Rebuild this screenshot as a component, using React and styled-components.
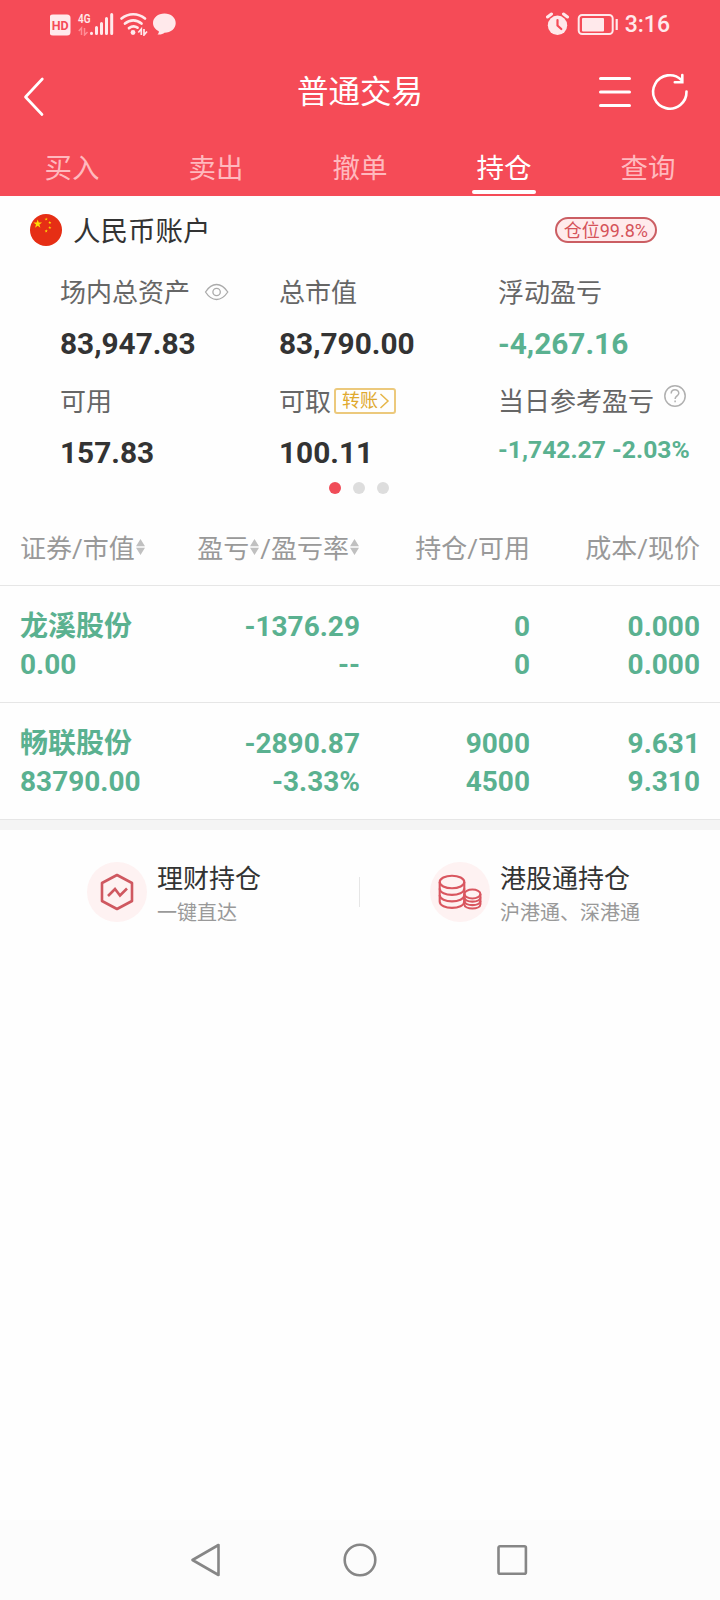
import React from "react";
import styled, { createGlobalStyle } from "styled-components";

const GlobalStyle = createGlobalStyle`
  body {
    margin: 0;
    background: #fefefe;
    font-family: Roboto, "Noto Sans CJK SC", sans-serif;
  }
`;

const Screen = styled.div`
  width: 720px;
  height: 1600px;
  display: flex;
  flex-direction: column;
  overflow: hidden;
  color: #333;
`;

const Header = styled.header`
  height: 196px;
  display: flex;
  flex-direction: column;
  background: #f54b57;
  color: #fff;
`;

const StatusBar = styled.div`
  height: 48px;
  padding: 0 50px;
  display: flex;
  align-items: center;
  justify-content: space-between;
  box-sizing: border-box;
  color: #ffe9eb;
`;

const StatusRight = styled.div`
  display: flex;
  align-items: center;
`;

const Clock = styled.span`
  margin-left: 6px;
  font-size: 23px;
  font-weight: 500;
  line-height: 50px;
  padding-top: 2px;
`;

const TitleBar = styled.div`
  height: 88px;
  padding: 0 31px 0 22px;
  display: grid;
  grid-template-columns: 100px 1fr 91px;
  align-items: center;
`;

const BackIcon = styled.svg`
  margin-top: 10px;
`;

const Title = styled.h1`
  margin: 0;
  padding-top: 2px;
  font-size: 31.5px;
  font-weight: 400;
  line-height: 86px;
  text-align: center;
`;

const Tabs = styled.nav`
  height: 60px;
  display: flex;
`;

const Tab = styled.div`
  flex: 1;
  display: flex;
  flex-direction: column;
  align-items: center;
  font-size: 27.5px;
  line-height: 54px;
  padding-top: 6px;
  height: 54px;
  color: ${(p) => (p.$active ? "#fff" : "#ffb9be")};
`;

const TabLine = styled.div`
  width: 64px;
  height: 4px;
  margin-top: -6px;
  flex-shrink: 0;
  border-radius: 2px;
  background: #fff;
`;

const Account = styled.section`
  height: 68px;
  padding: 0 63px 0 30px;
  display: flex;
  align-items: center;
`;

const AccountName = styled.span`
  margin-left: 11px;
  padding-top: 3px;
  flex: 1;
  font-size: 27.5px;
  line-height: 65px;
`;

const Pill = styled.span`
  height: 22px;
  padding: 0 7px;
  border: 2px solid #cb5e63;
  border-radius: 13px;
  background: #ffebec;
  color: #d5535a;
  font-size: 18px;
  line-height: 23px;
`;

const Summary = styled.section`
  padding: 0 0 0 60px;
  display: grid;
  grid-template-columns: 219px 219px 1fr;
  grid-auto-rows: 109px;
`;

const Cell = styled.div`
  display: flex;
  flex-direction: column;
`;

const Label = styled.div`
  height: 58px;
  display: flex;
  align-items: center;
  font-size: 26px;
  line-height: 60px;
  color: #666;
`;

const Value = styled.div`
  font-size: ${(p) => (p.$small ? "24.7px" : "29.8px")};
  font-weight: 700;
  line-height: ${(p) => (p.$small ? "38px" : "44px")};
  color: ${(p) => (p.$down ? "#5ab190" : "#333")};
`;

const EyeIcon = styled.svg`
  margin: 0 0 2px 14px;
`;

const HelpIcon = styled.svg`
  margin: 0 0 12px 10px;
`;

const Transfer = styled.span`
  height: 22px;
  margin-left: 3px;
  padding: 0 4px 0 6px;
  display: flex;
  align-items: center;
  gap: 1px;
  border: 2px solid #ecc97c;
  border-radius: 3px;
  font-size: 18px;
  line-height: 22px;
  color: #e0a92e;
  margin-bottom: 2px;
`;

const Dots = styled.div`
  height: 12px;
  margin-left: -3px;
  display: flex;
  justify-content: center;
  gap: 12px;
`;

const Dot = styled.span`
  width: 12px;
  height: 12px;
  border-radius: 50%;
  background: ${(p) => (p.$active ? "#f04c58" : "#ddd")};
`;

const Row = styled.div`
  padding: 0 20px;
  display: grid;
  grid-template-columns: 176px 164px 170px 170px;
  box-sizing: border-box;
  border-bottom: 1px solid #e6e6e6;
`;

const TableHead = styled(Row)`
  height: 92px;
  padding-top: 17px;
  font-size: 26px;
  line-height: 76px;
  color: #999;
`;

const HeadCell = styled.div`
  display: flex;
  align-items: center;
  white-space: nowrap;
  height: 76px;
  justify-content: ${(p) => (p.$left ? "flex-start" : "flex-end")};
`;

const SortIcon = styled.svg`
  margin: -5px 1px 0 1px;
  flex-shrink: 0;
`;

const StockRow = styled(Row)`
  height: 117px;
  padding-top: 22px;
  font-size: 28px;
  font-weight: 700;
  line-height: 38px;
  color: #5ab190;
`;

const StockCell = styled.div`
  text-align: ${(p) => (p.$left ? "left" : "right")};
`;

const Band = styled.div`
  height: 10px;
  background: #f4f4f4;
`;

const Entries = styled.section`
  height: 124px;
  display: flex;
  align-items: center;
`;

const Entry = styled.div`
  width: 360px;
  padding-left: ${(p) => p.$indent}px;
  display: flex;
  align-items: center;
  box-sizing: border-box;
`;

const EntryIcon = styled.div`
  width: 60px;
  height: 60px;
  border-radius: 50%;
  background: #fef2f2;
`;

const EntryText = styled.div`
  margin-left: 10px;
  padding-top: 4px;
`;

const EntryTitle = styled.div`
  font-size: 26px;
  line-height: 38px;
`;

const EntrySub = styled.div`
  font-size: 20px;
  line-height: 30px;
  color: #999;
`;

const Divider = styled.div`
  width: 1px;
  height: 30px;
  margin: 0 0 0 -1px;
  background: #e6e6e6;
`;

const NavBar = styled.footer`
  height: 80px;
  margin-top: auto;
  display: flex;
  align-items: center;
  justify-content: center;
  gap: 120px;
  background: #fcfcfc;
`;

const columns = [
  { head: ["证券/市值", "sort"], left: true },
  { head: ["盈亏", "sort", "/盈亏率", "sort"] },
  { head: ["持仓/可用"] },
  { head: ["成本/现价"] },
];

const stocks = [
  [
    ["龙溪股份", "0.00"],
    ["-1376.29", "--"],
    ["0", "0"],
    ["0.000", "0.000"],
  ],
  [
    ["畅联股份", "83790.00"],
    ["-2890.87", "-3.33%"],
    ["9000", "4500"],
    ["9.631", "9.310"],
  ],
];

const tabs = ["买入", "卖出", "撤单", "持仓", "查询"];

const STAR = "0,-1 .225,-.309 .951,-.309 .363,.118 .588,.809 0,.382 -.588,.809 -.363,.118 -.951,-.309 -.225,-.309";

function Sort() {
  return (
    <SortIcon width="9" height="16" viewBox="0 0 9 16" fill="#c0c0c0">
      <path d="M4.5 0L9 7.200H0zM4.500 16L0 8.800h9z" />
    </SortIcon>
  );
}

function StatusIcons() {
  return (
    <svg width="130" height="24" viewBox="50 12 130 24" fill="currentColor">
      <rect x="49.500" y="14.500" width="21" height="21" rx="3.500" />
      <text x="60.200" y="30" fontSize="13" fontWeight="700" textAnchor="middle" fill="#f54b57" textLength="17" lengthAdjust="spacingAndGlyphs">
        HD
      </text>
      <text x="78" y="22.800" fontSize="13" fontWeight="600" textLength="12.500" lengthAdjust="spacingAndGlyphs">
        4G
      </text>
      <path d="M81.500 35v-7l-2.700 3M84.500 28v7l3-3" fill="none" stroke="#ff8d95" strokeWidth="1.500" />
      <g stroke="currentColor" strokeWidth="3" strokeLinecap="round">
        <path d="M91.500 33.200v.3M96.500 27.500v6M101.500 23.500v10M106.500 18.500v15M111.700 14.500v19" />
      </g>
      <g fill="none" stroke="currentColor" strokeWidth="2.700" strokeLinecap="round">
        <path d="M121.500 18.500c7-5.700 16.500-5.700 23.500 0M125 23.500c5-4.300 11.500-4.300 16.500 0M129 28.200c3-2.200 6-2.200 8.500-.5" />
      </g>
      <circle cx="133" cy="32.500" r="2.400" />
      <path d="M141.300 35v-6l-3 3.500M144 29v6l3-3.500" fill="none" stroke="currentColor" strokeWidth="1.700" />
      <path d="M164.500 13.500c6.500 0 11.200 4.200 11.200 9.500s-4.700 9.800-11.200 9.800c-1.500 1.400-4 2-7 1.700 1-.9 1.500-2 1.300-3.200-3.500-1.700-5.800-4.800-5.800-8.300 0-5.300 5-9.500 11.500-9.500z" />
    </svg>
  );
}

function App() {
  return (
    <>
      <GlobalStyle />
      <Screen>
        <Header>
          <StatusBar>
            <StatusIcons />
            <StatusRight>
              <svg width="73" height="24" viewBox="546 12 73 24">
                <circle cx="557.500" cy="25.300" r="9.700" fill="currentColor" />
                <path d="M547.500 17l4-3M567.500 17l-4-3" stroke="currentColor" strokeWidth="3" strokeLinecap="round" />
                <path d="M557.500 20v5.500l3.800 3.500" fill="none" stroke="#f54b57" strokeWidth="2.200" strokeLinecap="round" />
                <rect x="578.700" y="15" width="34" height="19" rx="3.500" fill="none" stroke="currentColor" strokeWidth="2" />
                <rect x="582" y="18" width="22" height="13.500" rx="1" fill="currentColor" />
                <path d="M616.700 19v11" stroke="currentColor" strokeWidth="2.200" />
              </svg>
              <Clock>3:16</Clock>
            </StatusRight>
          </StatusBar>
          <TitleBar>
            <BackIcon width="24" height="40" viewBox="0 0 24 40" fill="none" stroke="#fff" strokeWidth="2.700" strokeLinecap="round" strokeLinejoin="round">
              <path d="M20.300 2L3.500 20 20 37.500" />
            </BackIcon>
            <Title>普通交易</Title>
            <svg width="91" height="40" viewBox="598 72 91 40" fill="none" stroke="#fff" strokeWidth="3" strokeLinecap="round">
              <path d="M600.500 78.500h29M600.500 92h29M600.500 105.500h29" />
              <path d="M686.500 91.500a16.700 16.700 0 1 1-5-11.500" strokeWidth="2.600" />
              <path d="M682.300 75v7.200h-7.500" strokeWidth="2.600" />
            </svg>
          </TitleBar>
          <Tabs>
            {tabs.map((name) => (
              <Tab key={name} $active={name === "持仓"}>
                {name}
                {name === "持仓" && <TabLine />}
              </Tab>
            ))}
          </Tabs>
        </Header>

        <Account>
          <svg width="32" height="32" viewBox="0 0 32 32">
            <circle cx="16" cy="16" r="16" fill="#e62e15" />
            <g fill="#fddc05">
              <polygon points={STAR} transform="translate(7.700 10) scale(4.600)" />
              <polygon points={STAR} transform="translate(16.200 5.200) scale(1.700)" />
              <polygon points={STAR} transform="translate(19.800 8.600) scale(1.700)" />
              <polygon points={STAR} transform="translate(19.800 13.700) scale(1.700)" />
              <polygon points={STAR} transform="translate(16.200 17) scale(1.700)" />
            </g>
          </svg>
          <AccountName>人民币账户</AccountName>
          <Pill>仓位99.8%</Pill>
        </Account>

        <Summary>
          <Cell>
            <Label>
              场内总资产
              <EyeIcon width="26" height="18" viewBox="0 0 26 18" fill="none" stroke="#aaa" strokeWidth="1.300">
                <path d="M1.500 9C8-1 17-1 23.800 9 17 19 8 19 1.500 9z" />
                <circle cx="12.600" cy="9" r="3.700" />
              </EyeIcon>
            </Label>
            <Value>83,947.83</Value>
          </Cell>
          <Cell>
            <Label>总市值</Label>
            <Value>83,790.00</Value>
          </Cell>
          <Cell>
            <Label>浮动盈亏</Label>
            <Value $down>-4,267.16</Value>
          </Cell>
          <Cell>
            <Label>可用</Label>
            <Value>157.83</Value>
          </Cell>
          <Cell>
            <Label>
              可取
              <Transfer>
                转账
                <svg width="11" height="16" viewBox="0 0 11 16" fill="none" stroke="#e6b649" strokeWidth="1.500">
                  <path d="M1.500 1l7.500 7-7.500 7" />
                </svg>
              </Transfer>
            </Label>
            <Value>100.11</Value>
          </Cell>
          <Cell>
            <Label>
              当日参考盈亏
              <HelpIcon width="22" height="22" viewBox="0 0 22 22" fill="none" stroke="#b0b0b0" strokeWidth="1.500">
                <circle cx="11" cy="11" r="10.200" />
                <path d="M7.200 8.500c0-5 7.600-4.800 7.600-.3 0 2.500-3.700 2.900-3.700 5.700M11.100 15.500v1.800" />
              </HelpIcon>
            </Label>
            <Value $small $down>-1,742.27 -2.03%</Value>
          </Cell>
        </Summary>

        <Dots>
          <Dot $active />
          <Dot />
          <Dot />
        </Dots>

        <TableHead>
          {columns.map((col, i) => (
            <HeadCell key={i} $left={col.left}>
              {col.head.map((part, j) => (part === "sort" ? <Sort key={j} /> : <span key={j}>{part}</span>))}
            </HeadCell>
          ))}
        </TableHead>
        {stocks.map((stock) => (
          <StockRow key={stock[0][0]}>
            {stock.map(([top, bottom], i) => (
              <StockCell key={i} $left={i === 0}>
                <div>{top}</div>
                <div>{bottom}</div>
              </StockCell>
            ))}
          </StockRow>
        ))}
        <Band />

        <Entries>
          <Entry $indent={87}>
            <EntryIcon>
              <svg width="60" height="60" viewBox="0 0 60 60" fill="none" stroke="#cf5860" strokeWidth="2.600" strokeLinejoin="round">
                <path d="M30 13l15 8v18l-15 8-15-8V21z" />
                <path d="M21 34l7-7 5 6.500 7-7" strokeLinejoin="miter" />
              </svg>
            </EntryIcon>
            <EntryText>
              <EntryTitle>理财持仓</EntryTitle>
              <EntrySub>一键直达</EntrySub>
            </EntryText>
          </Entry>
          <Divider />
          <Entry $indent={70}>
            <EntryIcon>
              <svg width="60" height="60" viewBox="0 0 60 60" fill="none" stroke="#d9565f" strokeWidth="2.100">
                <ellipse cx="22" cy="20" rx="12.300" ry="6.300" />
                <path d="M9.700 20v19.500c0 8.500 24.600 8.500 24.600 0V20" />
                <path d="M9.700 26.500c0 8.500 24.600 8.500 24.600 0M9.700 33c0 8.500 24.600 8.500 24.600 0" />
                <ellipse cx="42.400" cy="32" rx="8" ry="4.500" />
                <path d="M34.400 32v10.200c0 5.700 16 5.700 16 0V32" />
                <path d="M34.400 35.500c0 5.500 16 5.500 16 0M34.400 39c0 5.500 16 5.500 16 0" />
              </svg>
            </EntryIcon>
            <EntryText>
              <EntryTitle>港股通持仓</EntryTitle>
              <EntrySub>沪港通、深港通</EntrySub>
            </EntryText>
          </Entry>
        </Entries>

        <NavBar>
          <svg width="32" height="36" viewBox="0 0 32 36" fill="none" stroke="#868686" strokeWidth="2.600" strokeLinejoin="round">
            <path d="M27.500 3v30L1.500 18z" />
          </svg>
          <svg width="34" height="34" viewBox="0 0 34 34" fill="none" stroke="#868686" strokeWidth="2.600">
            <circle cx="17" cy="17" r="15.300" />
          </svg>
          <svg width="32" height="32" viewBox="0 0 32 32" fill="none" stroke="#868686" strokeWidth="2.600">
            <rect x="1.500" y="2.300" width="27.400" height="27.400" rx="1.500" />
          </svg>
        </NavBar>
      </Screen>
    </>
  );
}

export default App;
